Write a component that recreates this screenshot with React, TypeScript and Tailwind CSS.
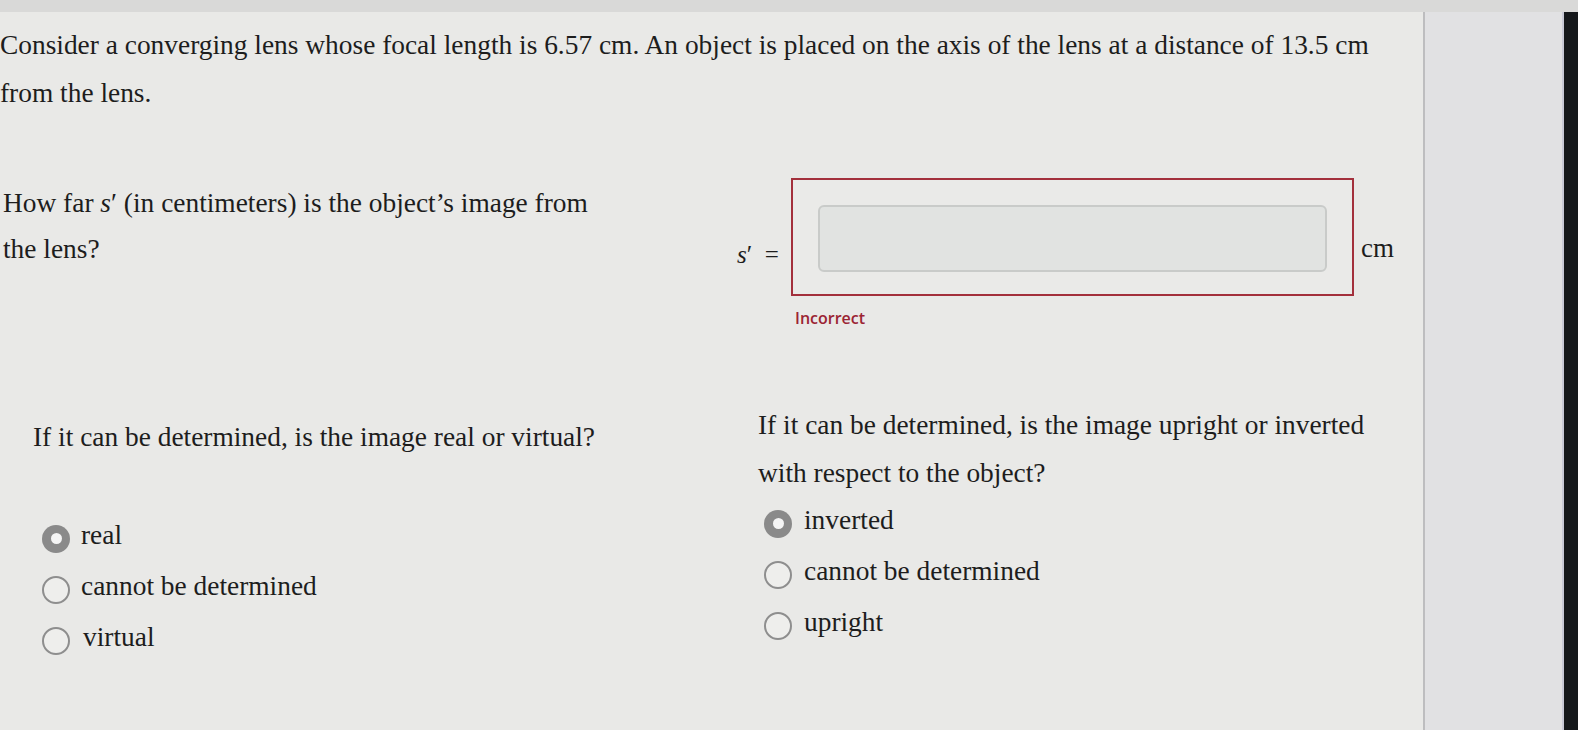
const serif = { fontFamily: '"Liberation Serif", "Times New Roman", serif' };

function Radio({ checked }: { checked: boolean }) {
  if (checked) {
    return (
      <span className="flex h-[28px] w-[28px] shrink-0 items-center justify-center rounded-full bg-[#8a8a8a]">
        <span className="h-[11px] w-[11px] rounded-full bg-[#f4f4f4]" />
      </span>
    );
  }
  return <span className="h-[28px] w-[28px] shrink-0 rounded-full border-2 border-[#8e8e8e] bg-[#eeeeec]" />;
}

function Option({ label, checked, gap }: { label: string; checked?: boolean; gap: string }) {
  return (
    <label className={`flex h-[51px] items-center ${gap}`}>
      <Radio checked={!!checked} />
      <span className="pb-[6px]">{label}</span>
    </label>
  );
}

export default function App() {
  return (
    <div className="flex h-[730px] w-[1578px] flex-col overflow-hidden bg-[#e6e6e4] text-[#1d1d1d]" style={serif}>
      <div className="h-[12px] shrink-0 bg-[#d9d9d8]" />
      <div className="flex min-h-0 flex-1">
        <main className="w-[1425px] shrink-0 border-r-2 border-[#bdbdbf] bg-[#e9e9e7] text-[27.4px]">
          <p className="pt-[9px] leading-[48px]">
            Consider a converging lens whose focal length is 6.57 cm. An object is placed on the axis of the lens at a distance of 13.5 cm
            <br />
            from the lens.
          </p>

          <div className="mt-[61px] flex items-start">
            <p className="w-[737px] shrink-0 pt-[2px] pl-[3px] leading-[46px]">
              How far <i>s</i>′ (in centimeters) is the object’s image from
              <br />
              the lens?
            </p>
            <div className="w-[54px] shrink-0 pt-[62px] text-[25px] leading-[30px]">
              <i>s</i>′ &nbsp;=
            </div>
            <div>
              <div className="h-[118px] w-[563px] border-2 border-[#a3303c] bg-[#eaeae8] p-[25px]">
                <div className="h-[67px] w-[509px] rounded-md border-2 border-[#c9cbc9] bg-[#e1e3e1]" />
              </div>
              <div
                className="mt-[12px] pl-[4px] text-[16px] font-semibold leading-[20px] text-[#9b2433]"
                style={{ fontFamily: '"Open Sans", "Noto Sans", sans-serif' }}
              >
                Incorrect
              </div>
            </div>
            <div className="pt-[55px] pl-[7px] text-[27px] leading-[30px]">cm</div>
          </div>

          <div className="mt-[73px] flex items-start">
            <div className="w-[758px] shrink-0 pl-[33px] pt-[12px]">
              <p className="leading-[48px]">If it can be determined, is the image real or virtual?</p>
              <div className="mt-[52px] pl-[9px]">
                <Option label="real" checked gap="gap-[11px]" />
                <Option label="cannot be determined" gap="gap-[11px]" />
                <Option label="virtual" gap="gap-[13px]" />
              </div>
            </div>
            <div>
              <p className="leading-[48px]">
                If it can be determined, is the image upright or inverted
                <br />
                with respect to the object?
              </p>
              <div className="mt-[1px] pl-[6px]">
                <Option label="inverted" checked gap="gap-[12px]" />
                <Option label="cannot be determined" gap="gap-[12px]" />
                <Option label="upright" gap="gap-[12px]" />
              </div>
            </div>
          </div>
        </main>
        <div className="w-[137px] shrink-0 bg-[#e1e1e3]" />
        <div className="w-[2px] shrink-0 bg-[#c9cad6]" />
        <div className="flex-1 bg-[#15181b]" />
      </div>
    </div>
  );
}
